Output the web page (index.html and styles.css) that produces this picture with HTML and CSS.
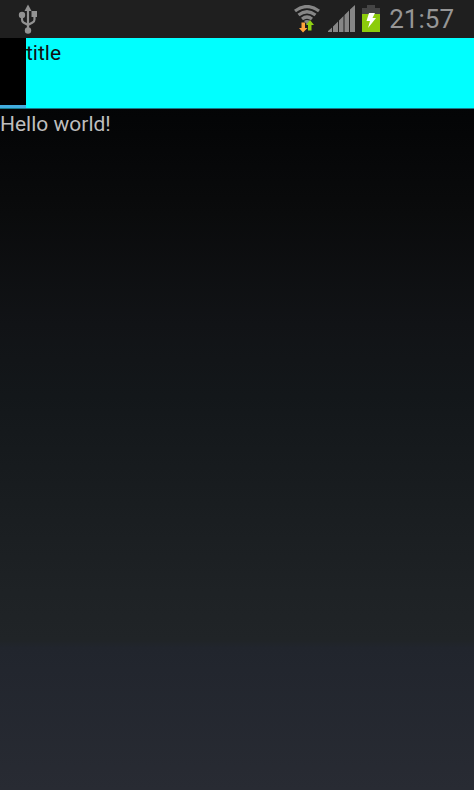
FILE: index.html
```html
<!DOCTYPE html>
<html lang="en">
<head>
<meta charset="utf-8">
<meta name="viewport" content="width=device-width, initial-scale=1">
<title>title</title>
<link rel="stylesheet" href="styles.css">
</head>
<body>
<div class="status-bar">
  <svg class="usb" width="20" height="30" viewBox="0 0 20 30" aria-label="USB connected">
    <path d="M10 5V25M4 11V15.500Q4 17.500 5.500 18.500L10 21L14.500 18.500Q16.500 17.500 16.500 15.500V10" fill="none" stroke="#929292" stroke-width="2.200"/>
    <path d="M10 0.500L13.500 7H6.500Z" fill="#929292"/>
    <circle cx="4" cy="11" r="3.200" fill="#929292"/>
    <rect x="13.500" y="7" width="5.500" height="6" fill="#929292"/>
    <circle cx="10" cy="26.500" r="3.200" fill="#929292"/>
  </svg>
  <div class="indicators">
    <svg width="28" height="28" viewBox="0 0 28 28" aria-label="Wi-Fi">
      <g fill="none" stroke="#868686" stroke-width="3.200">
        <path d="M2 6Q14 -3 26 6"/>
        <path d="M5.500 10Q14 3.500 22.500 10"/>
        <path d="M9 14Q14 10 19 14"/>
      </g>
      <path d="M11 16Q14 14 17 16L14 19.500Z" fill="#868686"/>
      <path d="M8.500 17.500H12V23H14.500L10 27.500L6 23H8.500Z" fill="#ffa43b"/>
      <path d="M15 25.500H18.500V20H21L17 15L13 20H15Z" fill="#8fd013"/>
    </svg>
    <svg width="28" height="28" viewBox="0 0 28 28" aria-label="Signal">
      <path d="M1 27V26L5 22.500V27ZM6 27V21.500L11 16.500V27ZM12 27V15.500L16.500 11V27ZM17.500 27V10L22 5.500V27ZM23 27V4.500L28 0V27Z" fill="#868686"/>
    </svg>
    <svg width="20" height="28" viewBox="0 0 20 28" aria-label="Battery charging">
      <path d="M6 0H14V3H19V9H1V3H6Z" fill="#454545"/>
      <rect x="1" y="9" width="18" height="18" fill="#8ccc0c"/>
      <path d="M8 8H14L11.500 13H15L7 23L9 16H5.500Z" fill="#fff"/>
    </svg>
    <time class="clock">21:57</time>
  </div>
</div>
<header class="title-bar">
  <div class="icon-slot"></div>
  <h1 class="title">title</h1>
</header>
<main class="content"><p class="message">Hello world!</p></main>
</body>
</html>
```
FILE: styles.css
```css
* {
  box-sizing: border-box;
}

body {
  display: flex;
  flex-direction: column;
  min-height: 100vh;
  margin: 0;
  background: linear-gradient(#000 0, #040506 15%, #0a0b0c 27%, #111316 41%, #13171a 50%, #1e2225 75%, #202427 81%, #21252d 82%, #282b33 100%);
  color: #bebebe;
  font-family: Roboto, sans-serif;
  font-size: 21px;
  line-height: 26px;
}

.status-bar {
  display: flex;
  align-items: center;
  justify-content: space-between;
  height: 38px;
  padding: 0 20px 0 18px;
  background: #1f1f1f;
}

.indicators {
  display: flex;
  align-items: center;
  gap: 6px;
}

.clock {
  margin-left: 2px;
  color: #969696;
  font-size: 26px;
}

.title-bar {
  display: flex;
  height: 71px;
  border-bottom: 1px solid #16798a;
}

.icon-slot {
  width: 26px;
  background: #000;
  border-bottom: 3px solid #42ade0;
}

.title {
  flex: 1;
  margin: 0;
  padding-top: 2px;
  background: #0ff;
  color: #101010;
  font-size: 21px;
  font-weight: 400;
}

.content {
  flex: 1;
  padding-top: 2px;
}

.message {
  margin: 0;
}
```
